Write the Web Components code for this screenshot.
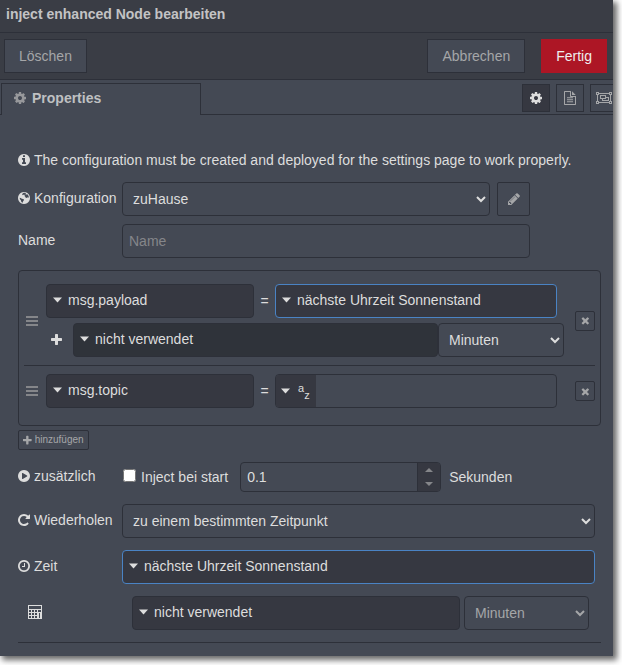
<!DOCTYPE html>
<html lang="de">
<head>
<meta charset="utf-8">
<title>inject enhanced Node bearbeiten</title>
<style>
body {
  margin: 0;
  padding: 0 9px 9px 0;
  background: #fff;
  font: 14px/20px "Liberation Sans", Arial, sans-serif;
  color: #ddd;
  --panel: #444954;
  --bar: #3a3d45;
  --dark: #363841;
  --line: #2d3039;
  --focus: #4a83c4;
  --muted: #a5a6a8;
}
</style>
</head>
<body>
<node-dialog></node-dialog>

<script>
const circle = 'M896 128q209 0 385.5 103t279.5 279.5 103 385.5-103 385.5-279.5 279.5-385.5 103-385.5-103-279.5-279.5-103-385.5 103-385.5 279.5-279.5 385.5-103z'

// [width in units, left edge, path], 128 units are one pixel at 14px
const icons = {
  cog: [1536, 128, 'M1152 896q0-106-75-181t-181-75-181 75-75 181 75 181 181 75 181-75 75-181zm512-109v222q0 12-8 23t-20 13l-185 28q-19 54-39 91 35 50 107 138 10 12 10 25t-9 23q-27 37-99 108t-94 71q-12 0-26-9l-138-108q-44 23-91 38-16 136-29 186-7 28-36 28h-222q-14 0-24.5-8.5t-11.5-21.5l-28-184q-49-16-90-37l-141 107q-10 9-25 9-14 0-25-11-126-114-165-168-7-10-7-23 0-12 8-23 15-21 51-66.5t54-70.5q-27-50-41-99l-183-27q-13-2-21-12.5t-8-23.5v-222q0-12 8-23t19-13l186-28q14-46 39-92-40-57-107-138-10-12-10-24 0-10 9-23 26-36 98.5-107.5t94.5-71.5q13 0 26 10l138 107q44-23 91-38 16-136 29-186 7-28 36-28h222q14 0 24.5 8.5t11.5 21.5l28 184q49 16 90 37l142-107q9-9 24-9 13 0 25 10 129 119 165 170 7 8 7 22 0 12-8 23-15 21-51 66.5t-54 70.5q26 50 41 98l183 28q13 2 21 12.5t8 23.5z'],
  info: [1536, 128, circle + 'M1152 1376v-160q0-14-9-23t-23-9h-96v-512q0-14-9-23t-23-9h-320q-14 0-23 9t-9 23v160q0 14 9 23t23 9h96v320h-96q-14 0-23 9t-9 23v160q0 14 9 23t23 9h448q14 0 23-9t9-23zM1024 480v-160q0-14-9-23t-23-9h-192q-14 0-23 9t-9 23v160q0 14 9 23t23 9h192q14 0 23-9t9-23z'],
  globe: [1536, 128, circle + 'M780 250L960 230L1160 290L1060 400L1180 460L1330 420L1470 600L1520 800L1420 860L1300 800L1240 900L1120 860L1060 720L960 640L1000 520L880 460L760 540L660 480L700 340ZM340 860L480 900L620 980L800 1020L900 1120L840 1260L760 1340L740 1500L600 1450L520 1320L500 1180L380 1060Z'],
  pencil: [1536, 128, 'M491 1536l91-91-235-235-91 91v107h128v128h107zm523-928q0-22-22-22-10 0-17 7l-542 542q-7 7-7 17 0 22 22 22 10 0 17-7l542-542q7-7 7-17zm-54-192l416 416-832 832h-416v-416zm683 96q0 53-37 90l-166 166-416-416 166-165q36-38 90-38 53 0 91 38l235 234q37 39 37 91z'],
  file: [1536, 128, 'M1596 476q14 14 28 36h-472v-472q22 14 36 28zM1024 640h640v1056q0 40-28 68t-68 28H224q-40 0-68-28t-28-68V96q0-40 28-68t68-28h800zM1536 1664V768H992q-40 0-68-28t-28-68V128H256v1536ZM512 800H1280V928H512ZM512 1056H1280V1184H512ZM512 1312H1280V1440H512Z'],
  group: [2048, 0, 'M0 128H384V256H1664V128H2048V512H1920V1280H2048V1664H1664V1536H384V1664H0V1280H128V512H0ZM128 256V384H256V256ZM1792 256V384H1920V256ZM128 1408V1536H256V1408ZM1792 1408V1536H1920V1408ZM384 384V512H256V1280H384V1408H1664V1280H1792V512H1664V384ZM512 512H1280V768H1664V1280H768V1024H512ZM640 640V896H1152V640ZM1280 896V1024H896V1152H1536V896Z'],
  plus: [1408, 192, 'M1600 736v192q0 40-28 68t-68 28h-416v416q0 40-28 68t-68 28h-192q-40 0-68-28t-28-68v-416h-416q-40 0-68-28t-28-68v-192q0-40 28-68t68-28h416v-416q0-40 28-68t68-28h192q40 0 68 28t28 68v416h416q40 0 68 28t28 68z'],
  times: [1408, 192, 'M1490 1322q0 40-28 68l-136 136q-28 28-68 28t-68-28l-294-294-294 294q-28 28-68 28t-68-28l-136-136q-28-28-28-68t28-68l294-294-294-294q-28-28-28-68t28-68l136-136q28-28 68-28t68 28l294 294 294-294q28-28 68-28t68 28l136 136q28 28 28 68t-28 68l-294 294 294 294q28 28 28 68z'],
  bars: [1536, 128, 'M128 256H1664V512H128ZM128 768H1664V1024H128ZM128 1280H1664V1536H128Z'],
  play: [1536, 128, circle + 'M1280 951q32-18 32-55t-32-55l-544-320q-31-19-64-1-32 19-32 56v640q0 37 32 56 16 8 32 8 17 0 32-9z'],
  repeat: [1536, 128, 'M1664 256v448q0 26-19 45t-45 19h-448q-42 0-59-40-17-39 14-69l138-138q-148-137-349-137-104 0-198.5 40.5t-163.5 109.5-109.5 163.5-40.5 198.5 40.5 198.5 109.5 163.5 163.5 109.5 198.5 40.5q119 0 225-52t179-147q7-10 23-12 15 0 25 9l137 138q9 8 9.5 20.5t-7.5 22.5q-109 132-264 204.5t-327 72.5q-156 0-298-61t-245-164-164-245-61-298 61-298 164-245 245-164 298-61q147 0 284.5 55.5t244.5 156.5l130-129q29-31 70-14 39 17 39 59z'],
  clock: [1536, 128, circle + 'M1440 896q0-148-73-273t-198-198-273-73-273 73-198 198-73 273 73 273 198 198 273 73 273-73 198-198 73-273zM1024 544v448q0 14-9 23t-23 9h-320q-14 0-23-9t-9-23v-64q0-14 9-23t23-9h224v-352q0-14 9-23t23-9h64q14 0 23 9t9 23z'],
  calculator: [1792, 0, 'M0 0H1792V1792H0ZM128 128V512H1664V128ZM128 640V896H384V640ZM512 640V896H768V640ZM896 640V896H1152V640ZM1280 640V896H1664V640ZM128 1024V1280H384V1024ZM512 1024V1280H768V1024ZM896 1024V1280H1152V1024ZM1408 1024V1664H1536V1024ZM128 1408V1664H384V1408ZM512 1408V1664H768V1408ZM896 1408V1664H1152V1408Z'],
  caret: [1152, 0, 'M0 576H1152L576 1216Z']
}

// attaches an open shadow root filled from the given markup
function render(el, html) {
  const template = document.createElement('template')
  template.innerHTML = html
  el.attachShadow({mode: 'open'}).appendChild(template.content.cloneNode(true))
}

class FaIcon extends HTMLElement {
  constructor() {
    super()
    const [w, x, d] = icons[this.getAttribute('name')]
    render(this, `
<style>
:host { display: inline-block; vertical-align: -2px; flex: none; }
svg { display: block; height: var(--icon-size, 14px); fill: currentColor; fill-rule: evenodd; }
</style>
<svg viewBox="${x} 0 ${w} 1792" aria-hidden="true"><path d="${d}"/></svg>`)
  }
}

class RedButton extends HTMLElement {
  constructor() {
    super()
    const label = this.getAttribute('label')
    render(this, `
<style>
:host { display: block; flex: none; }
button {
  display: flex; align-items: center; justify-content: center; gap: 3px;
  box-sizing: border-box; width: 100%; height: 34px; padding: 0 14px;
  border: 1px solid var(--line); border-radius: 0;
  background: var(--panel); color: var(--muted); font: inherit;
}
:host([kind=primary]) button { background: #ad1625; border-color: #ad1625; color: #eee; }
:host([kind=square]) button { width: 33px; padding: 0; border-radius: 2px; }
:host([kind=tab]) button { width: 28px; height: 28px; padding: 0; }
:host([kind=tab][selected]) button { background: var(--dark); color: #ddd; }
:host([kind=tiny]) { --icon-size: 11px; }
:host([kind=tiny]) button { min-width: 20px; height: 20px; padding: 0 4px; border-radius: 2px; font-size: 10px; }
</style>
<button type="button"${label ? ` aria-label="${label}"` : ''}><slot></slot></button>`)
  }
}

class TabBar extends HTMLElement {
  constructor() {
    super()
    render(this, `
<style>
:host { display: flex; align-items: flex-end; height: 35px; padding-left: 1px; box-shadow: inset 0 -1px var(--line); overflow: hidden; }
.tab {
  display: flex; align-items: center; gap: 6px; box-sizing: border-box; flex: 0 1 200px; height: 32px; padding: 0 12px 3px;
  border: 1px solid var(--line); border-bottom: 0; background: var(--panel);
  color: #bfc0c2; font: inherit; font-weight: bold;
}
.tab fa-icon { color: #97989b; }
.tools { display: flex; gap: 6px; margin: 0 -5px 3px auto; }
</style>
<button class="tab" type="button"><fa-icon name="cog"></fa-icon>Properties</button>
<div class="tools"><slot></slot></div>`)
  }
}

class FormRow extends HTMLElement {
  constructor() {
    super()
    render(this, `
<style>
:host { display: flex; align-items: center; }
.label { flex: none; width: 104px; padding-bottom: 2px; white-space: nowrap; }
.field { display: flex; align-items: center; flex: 1; min-width: 0; }
</style>
<div class="label"><slot name="label"></slot></div>
<div class="field"><slot></slot></div>`)
  }
}

class TypeField extends HTMLElement {
  constructor() {
    super()
    const editable = this.hasAttribute('editable')
    render(this, `
<style>
:host {
  display: flex; box-sizing: border-box; height: 34px; min-width: 0; overflow: hidden;
  border: 1px solid var(--line); border-radius: 4px; background: var(--dark);
}
:host([active]) { border-color: var(--focus); }
:host([shaded]) { background: #2f333a; }
:host([editable]) { background: transparent; }
button {
  display: flex; align-items: center; gap: 6px; flex: 1; min-width: 0; padding: 0 6px 2px;
  border: 0; background: none; color: inherit; font: inherit; white-space: nowrap;
}
:host([editable]) button { flex: 0 0 40px; gap: 8px; padding: 0 5px; background: var(--dark); }
input { flex: 1; min-width: 0; border: 0; padding: 0 6px; background: none; color: inherit; font: inherit; }
</style>
<button type="button" aria-haspopup="menu"><fa-icon name="caret"></fa-icon><slot></slot></button>
${editable ? '<input type="text" aria-label="Wert">' : ''}`)
  }
}

class NumberSpinner extends HTMLElement {
  constructor() {
    super()
    render(this, `
<style>
:host { display: flex; box-sizing: border-box; height: 30px; overflow: hidden; border: 1px solid var(--line); border-radius: 4px; }
input { flex: 1; min-width: 0; padding: 0 6px; border: 0; background: none; color: inherit; font: inherit; }
.steps { display: flex; flex-direction: column; width: 22px; border-left: 1px solid var(--line); background: var(--dark); }
button { display: flex; flex: 1; align-items: center; justify-content: center; padding: 0; border: 0; background: none; }
svg { width: 8px; height: 4px; fill: #85868a; }
</style>
<input type="text" inputmode="decimal" value="${this.getAttribute('value')}" aria-label="Sekunden">
<div class="steps">
  <button type="button" aria-label="mehr"><svg viewBox="0 0 8 4"><path d="M0 4L4 0L8 4Z"/></svg></button>
  <button type="button" aria-label="weniger"><svg viewBox="0 0 8 4"><path d="M0 0L4 4L8 0Z"/></svg></button>
</div>`)
  }
}

class RuleItem extends HTMLElement {
  constructor() {
    super()
    render(this, `
<style>
:host { display: flex; align-items: center; padding: 8px 0; }
.handle { width: 22px; padding-left: 2px; box-sizing: border-box; color: #85868a; }
.lines { display: flex; flex-direction: column; gap: 5px; flex: 1; min-width: 0; }
red-button { margin-left: 11px; }
</style>
<fa-icon class="handle" name="bars"></fa-icon>
<div class="lines"><slot></slot></div>
<red-button kind="tiny" label="entfernen"><fa-icon name="times"></fa-icon></red-button>`)
  }
}

class NodeDialog extends HTMLElement {
  constructor() {
    super()
    render(this, `
<style>
:host { display: block; background: var(--panel); box-shadow: 3px 3px 6px 1px rgba(0, 0, 0, .6); }
header { background: var(--bar); }
h1 { margin: 0; padding: 4px 6px 8px; border-bottom: 1px solid var(--line); font-size: 14px; line-height: 20px; color: #c3c3c4; }
.toolbar { display: flex; align-items: center; gap: 16px; padding: 6px 6px 6px 4px; border-bottom: 1px solid var(--line); }
.toolbar red-button:first-child { margin-right: auto; }
form { padding: 35px 12px 13px 18px; }
p { margin: 0 0 12px; }
fa-icon { margin-right: 4px; }
red-button fa-icon { margin-right: 0; }
select, .text {
  box-sizing: border-box; height: 34px; min-width: 0; flex: 1; padding: 0 6px;
  border: 1px solid var(--line); border-radius: 4px; background: var(--panel); color: inherit; font: inherit;
}
.text::placeholder { color: #85868a; }
select:disabled { opacity: 1; color: var(--muted); }
.short { width: 88%; max-width: 512px; margin-bottom: 8px; }
.short red-button { margin-left: 7px; }
.rules { margin-top: 12px; padding: 5px 5px 9px; border: 1px solid var(--line); border-radius: 4px; }
.rules rule-item + rule-item { border-top: 1px solid var(--line); }
.line { display: flex; align-items: center; }
.property { flex: 0 1 208px; }
.value { flex: 1; margin-right: 7px; }
.eq { width: 21px; text-align: center; }
.add { width: 23px; margin: 0 4px 0 0; padding-left: 5px; box-sizing: border-box; }
.line .unit { flex: 0 0 126px; }
.offset { flex: 1; }
.az { display: flex; font-size: 11px; line-height: 12px; }
.az span:first-child { padding-bottom: 7px; }
.az span:last-child { padding-top: 7px; }
.new { width: fit-content; margin: 4px 0 12px; }
.check { width: 13px; height: 13px; margin: 0 5px 4px 1px; }
number-spinner { flex: 0 1 201px; margin: 0 8px 0 12px; }
.wide { padding-right: 6px; }
.wide > select, .wide > type-field { flex: 1; }
.gap { margin-top: 12px; }
.calc { padding-left: 10px; }
.last { padding-right: 12px; }
.last > type-field { margin: 0 4px 0 10px; }
.last > select { flex: 0 0 125px; }
hr { margin: 12px 0 0; border: 0; border-top: 1px solid var(--line); }
</style>
<header>
  <h1>inject enhanced Node bearbeiten</h1>
  <div class="toolbar">
    <red-button>Löschen</red-button>
    <red-button>Abbrechen</red-button>
    <red-button kind="primary">Fertig</red-button>
  </div>
</header>
<tab-bar>
  <red-button kind="tab" selected label="Properties"><fa-icon name="cog"></fa-icon></red-button>
  <red-button kind="tab" label="Description"><fa-icon name="file"></fa-icon></red-button>
  <red-button kind="tab" label="Appearance"><fa-icon name="group"></fa-icon></red-button>
</tab-bar>
<form>
  <p><fa-icon name="info"></fa-icon>The configuration must be created and deployed for the settings page to work properly.</p>
  <form-row class="short">
    <label slot="label" for="config"><fa-icon name="globe"></fa-icon>Konfiguration</label>
    <select id="config"><option>zuHause</option></select>
    <red-button kind="square" label="bearbeiten"><fa-icon name="pencil"></fa-icon></red-button>
  </form-row>
  <form-row class="short">
    <label slot="label" for="name">Name</label>
    <input class="text" id="name" type="text" placeholder="Name">
  </form-row>

  <div class="rules">
    <rule-item>
      <div class="line">
        <type-field class="property">msg.payload</type-field><span class="eq">=</span>
        <type-field class="value" active>nächste Uhrzeit Sonnenstand</type-field>
      </div>
      <div class="line">
        <fa-icon class="add" name="plus"></fa-icon>
        <type-field class="offset" shaded>nicht verwendet</type-field>
        <select class="unit" aria-label="Einheit"><option>Minuten</option></select>
      </div>
    </rule-item>
    <rule-item>
      <div class="line">
        <type-field class="property">msg.topic</type-field><span class="eq">=</span>
        <type-field class="value" editable><span class="az"><span>a</span><span>z</span></span></type-field>
      </div>
    </rule-item>
  </div>
  <red-button class="new" kind="tiny"><fa-icon name="plus"></fa-icon>hinzufügen</red-button>

  <form-row>
    <span slot="label"><fa-icon name="play"></fa-icon>zusätzlich</span>
    <input class="check" id="once" type="checkbox"><label for="once">Inject bei start</label>
    <number-spinner value="0.1"></number-spinner>Sekunden
  </form-row>
  <form-row class="wide gap">
    <label slot="label" for="repeat"><fa-icon name="repeat"></fa-icon>Wiederholen</label>
    <select id="repeat"><option>zu einem bestimmten Zeitpunkt</option></select>
  </form-row>
  <form-row class="wide gap">
    <span slot="label"><fa-icon name="clock"></fa-icon>Zeit</span>
    <type-field active>nächste Uhrzeit Sonnenstand</type-field>
  </form-row>
  <form-row class="last gap wide">
    <fa-icon class="calc" slot="label" name="calculator"></fa-icon>
    <type-field>nicht verwendet</type-field>
    <select disabled aria-label="Einheit"><option>Minuten</option></select>
  </form-row>
  <hr>
</form>`)
  }
}

// parts first, so that the dialog clones already known elements
customElements.define('fa-icon', FaIcon)
customElements.define('red-button', RedButton)
customElements.define('tab-bar', TabBar)
customElements.define('form-row', FormRow)
customElements.define('type-field', TypeField)
customElements.define('number-spinner', NumberSpinner)
customElements.define('rule-item', RuleItem)
customElements.define('node-dialog', NodeDialog)
</script>
</body>
</html>
